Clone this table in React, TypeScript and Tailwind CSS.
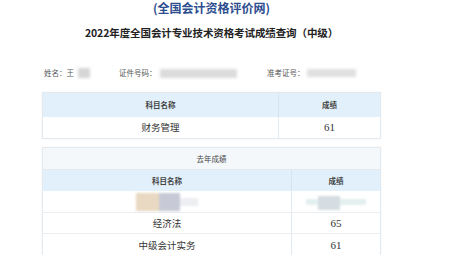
import React from "react";

const cjk = '"Noto Sans CJK SC", "Noto Sans", sans-serif';
const serif = '"Liberation Serif", "Noto Sans CJK SC", serif';

export default function App() {
  return (
    <div
      className="w-[453px] h-[255px] overflow-hidden bg-white text-[#333]"
      style={{ fontFamily: cjk }}
    >
      <div className="ml-[42px] w-[339px] flex flex-col">
        <div className="h-[14px] text-center text-[12px] leading-[16px] font-bold text-[#2d4d8e]">
          (全国会计资格评价网)
        </div>
        <div className="mt-[12px] h-[14px] text-center text-[10.5px] leading-[14px] font-bold text-[#222] tracking-[-0.1px]">
          2022年度全国会计专业技术资格考试成绩查询（中级）
        </div>

        <div className="mt-[27px] h-[12px] flex items-center text-[7.5px] leading-[12px] text-[#555]">
          <div className="w-[77px] pl-[2px] flex items-center">
            <span>姓名：王</span>
            <span className="ml-[4px] w-[12px] h-[10px] bg-[#d6d6d6] blur-[1.5px]" />
          </div>
          <div className="w-[148px] flex items-center">
            <span>证件号码：</span>
            <span className="ml-[3px] w-[77px] h-[9px] bg-[#dcdcdc] blur-[1.5px]" />
          </div>
          <div className="flex items-center">
            <span>准考证号：</span>
            <span className="ml-[2px] w-[49px] h-[8px] bg-[#e0e0e0] blur-[1.5px]" />
          </div>
        </div>

        {/* Table 1 */}
        <div className="mt-[13px] border border-[#e2eaf0] shadow-[0_0_2px_rgba(0,0,0,0.06)]">
          <div className="flex h-[24px] bg-[#e1f0fa] text-[7.5px] font-bold text-[#444]">
            <div className="w-[236px] flex items-center justify-center border-r border-[#d6e4ee]">科目名称</div>
            <div className="flex-1 flex items-center justify-center">成绩</div>
          </div>
          <div className="flex h-[21px] text-[9.5px] text-[#333]">
            <div className="w-[236px] flex items-center justify-center border-r border-[#e2eaf0]">财务管理</div>
            <div className="flex-1 flex items-center justify-center text-[11px]" style={{ fontFamily: serif }}>61</div>
          </div>
        </div>

        {/* Table 2 */}
        <div className="mt-[8px] border border-[#e2eaf0] shadow-[0_0_2px_rgba(0,0,0,0.06)]">
          <div className="h-[22px] flex items-center justify-center bg-[#f4f8fb] text-[7.5px] text-[#444] border-b border-[#e2eaf0]">
            去年成绩
          </div>
          <div className="flex h-[21px] bg-[#e1f0fa] text-[7.5px] font-bold text-[#444]">
            <div className="w-[249px] flex items-center justify-center border-r border-[#d6e4ee]">科目名称</div>
            <div className="flex-1 flex items-center justify-center">成绩</div>
          </div>
          <div className="flex h-[22px] border-b border-[#e8eef2]">
            <div className="w-[249px] flex items-center justify-center border-r border-[#e2eaf0]">
              <div className="flex items-center blur-[1px]">
                <span className="w-[23px] h-[18px] bg-[#ead9c2]" />
                <span className="w-[21px] h-[18px] bg-[#c7cad6]" />
                <span className="w-[18px] h-[8px] bg-[#eceef2]" />
              </div>
            </div>
            <div className="flex-1 flex items-center justify-center">
              <div className="relative w-[60px] h-[6px] bg-[#e3f0ef] blur-[1px]">
                <span className="absolute left-[12px] top-[-3px] w-[22px] h-[14px] bg-[#d5dde2]" />
              </div>
            </div>
          </div>
          <div className="flex h-[21px] text-[9.5px] border-b border-[#e8eef2]">
            <div className="w-[249px] flex items-center justify-center border-r border-[#e2eaf0]">经济法</div>
            <div className="flex-1 flex items-center justify-center text-[11px]" style={{ fontFamily: serif }}>65</div>
          </div>
          <div className="flex h-[22px] text-[9.5px]">
            <div className="w-[249px] flex items-center justify-center border-r border-[#e2eaf0]">中级会计实务</div>
            <div className="flex-1 flex items-center justify-center text-[11px]" style={{ fontFamily: serif }}>61</div>
          </div>
        </div>
      </div>
    </div>
  );
}
